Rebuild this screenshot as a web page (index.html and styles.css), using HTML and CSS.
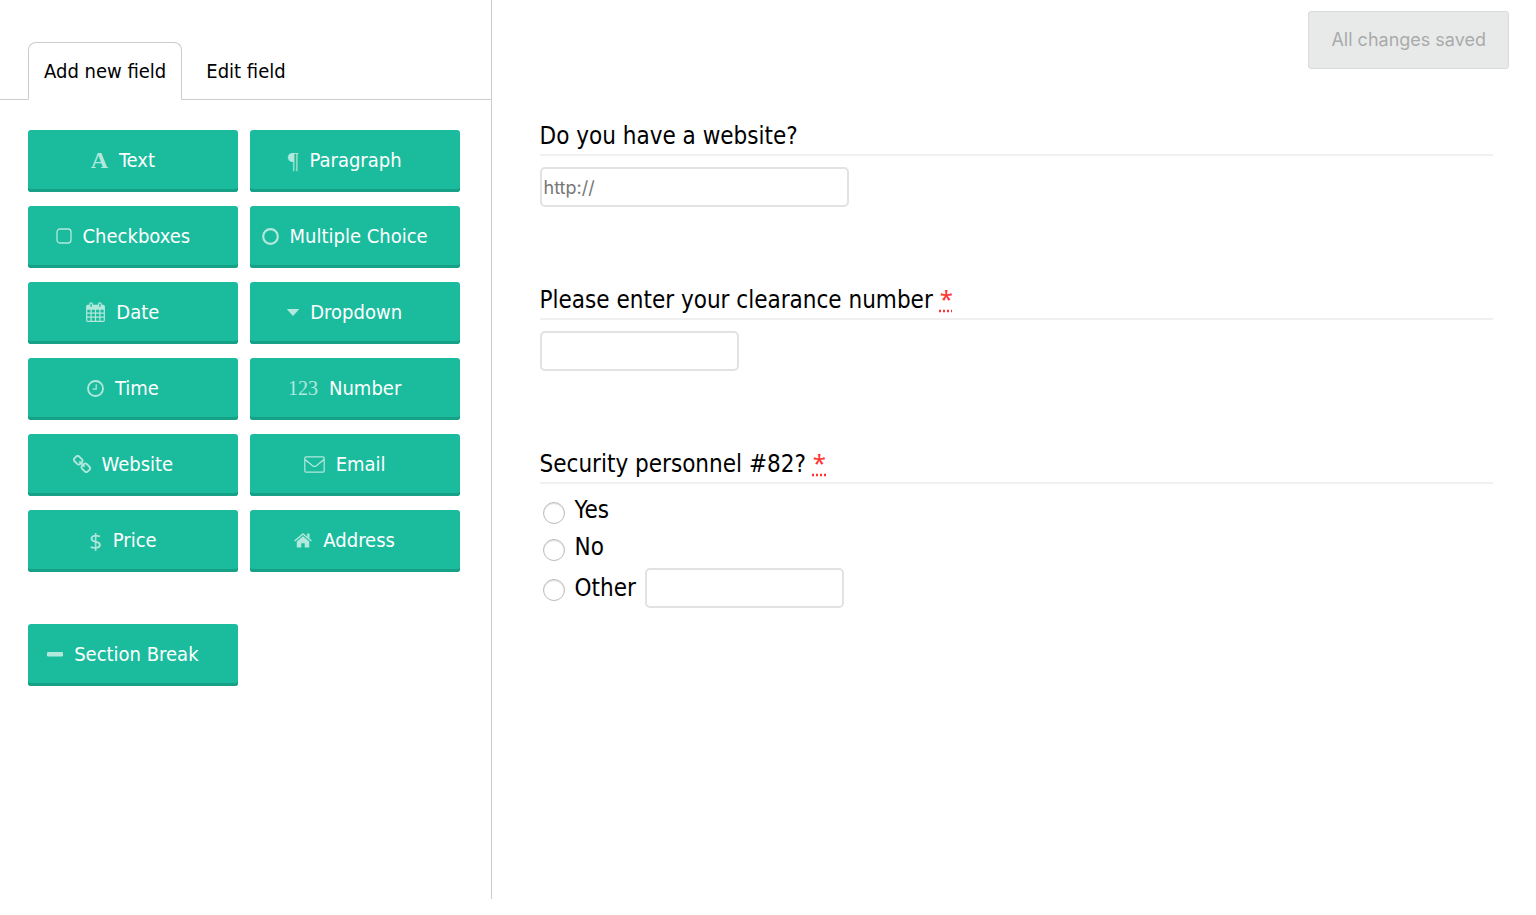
FILE: index.html
```html
<!DOCTYPE html>
<html lang="en">
<head>
<meta charset="UTF-8" />
<meta name="viewport" content="width=device-width, initial-scale=1" />
<title>Form builder</title>
<link rel="stylesheet" href="styles.css">
</head>
<body>

<div class="builder">
  <aside class="sidebar">
    <nav class="tabs">
      <a class="tab active" href="#add">Add new field</a>
      <a class="tab" href="#edit">Edit field</a>
    </nav>

    <div class="field-types" id="add">
      <button type="button" class="add-btn"><span class="glyph bold">A</span>Text</button>
      <button type="button" class="add-btn"><span class="glyph pilcrow">¶</span>Paragraph</button>
      <button type="button" class="add-btn">
        <svg class="icon" width="16" height="16" viewBox="0 0 16 16"><rect x="1" y="1" width="14" height="14" rx="3" stroke-width="1.3"/></svg>Checkboxes
      </button>
      <button type="button" class="add-btn">
        <svg class="icon" width="17" height="17" viewBox="0 0 17 17"><circle cx="8.5" cy="8.5" r="7.3" stroke-width="2.2"/></svg>Multiple Choice
      </button>
      <button type="button" class="add-btn">
        <svg class="icon" width="19" height="20" viewBox="0 0 19 20"><rect x=".7" y="3.4" width="17.6" height="15.9" rx="1"/><path d="M.7 7.2h17.6M.7 11.2h17.6M.7 15.2h17.6M5.1 7.2v12.1M9.5 7.2v12.1M13.9 7.2v12.1"/><path d="M1 4h17v3H1z" fill="currentColor" stroke="none"/><rect class="ring" x="3.8" y=".8" width="2.6" height="4.8" rx="1.3"/><rect class="ring" x="12.6" y=".8" width="2.6" height="4.8" rx="1.3"/></svg>Date
      </button>
      <button type="button" class="add-btn">
        <svg class="icon" width="12" height="7" viewBox="0 0 12 7"><path d="M.5 0h11q.7.3.2.8L6.5 6.6q-.5.4-1 0L.3.8Q-.2.3.5 0z" fill="currentColor" stroke="none"/></svg>Dropdown
      </button>
      <button type="button" class="add-btn">
        <svg class="icon" width="17" height="17" viewBox="0 0 17 17"><circle cx="8.5" cy="8.5" r="7.5" stroke-width="1.8"/><path d="M9.2 4.2v5H5.7"/></svg>Time
      </button>
      <button type="button" class="add-btn"><span class="glyph">123</span>Number</button>
      <button type="button" class="add-btn">
        <svg class="icon" width="18" height="18" viewBox="0 0 18 18"><g stroke-width="1.8"><rect x="-4" y="-3.3" width="8" height="6.6" rx="2.2" transform="translate(5.2 5.2) rotate(45)"/><rect x="-4" y="-3.3" width="8" height="6.6" rx="2.2" transform="translate(12.8 12.8) rotate(45)"/><path d="M6.3 6.3l5.4 5.4"/></g></svg>Website
      </button>
      <button type="button" class="add-btn">
        <svg class="icon" width="21" height="17" viewBox="0 0 21 17"><rect x=".8" y=".8" width="19.4" height="15.4" rx="1.4"/><path d="M1 3.5c3 2.700 5 4 7.500 6.200q2 1.500 4 0C15 7.500 17 6.200 20 3.500"/></svg>Email
      </button>
      <button type="button" class="add-btn"><span class="glyph sans">$</span>Price</button>
      <button type="button" class="add-btn">
        <svg class="icon" width="18" height="15" viewBox="0 0 18 15"><path d="M9 3.300l6.200 5.200v5.400q0 .7-.7.700h-3.800v-4.300H7.300v4.300H3.500q-.7 0-.7-.7V8.500z" fill="currentColor" stroke="none"/><path d="M.6 8L9 1l8.400 7" stroke-width="1.5"/><path d="M13.200.5h2.300v5l-2.300-2z" fill="currentColor" stroke="none"/></svg>Address
      </button>
    </div>

    <div class="field-types">
      <button type="button" class="add-btn">
        <svg class="icon" width="16" height="5" viewBox="0 0 16 5"><rect width="16" height="4.5" rx="1.2" fill="currentColor" stroke="none"/></svg>Section Break
      </button>
    </div>
  </aside>

  <main class="preview">
    <button type="button" class="save-btn" disabled>All changes saved</button>

    <form class="form">
      <div class="field">
        <label class="field-label" for="website">Do you have a website?</label>
        <input class="input wide" type="text" id="website" placeholder="http://">
      </div>

      <div class="field">
        <label class="field-label" for="clearance">Please enter your clearance number <abbr class="required">*</abbr></label>
        <input class="input" type="text" id="clearance">
      </div>

      <fieldset class="field">
        <legend class="field-label">Security personnel #82? <abbr class="required">*</abbr></legend>
        <label class="option"><input type="radio" name="security">Yes</label>
        <label class="option"><input type="radio" name="security">No</label>
        <div class="option other">
          <label class="option"><input type="radio" name="security">Other</label>
          <input class="input" type="text" aria-label="Other">
        </div>
      </fieldset>
    </form>
  </main>
</div>

</body>
</html>
```
FILE: styles.css
```css
* {
  box-sizing: border-box;
}
body {
  margin: 0;
  background: #fff;
  color: #000;
  font-family: Tahoma, "DejaVu Sans Condensed", "Noto Sans", sans-serif;
}
.builder {
  display: flex;
  min-height: calc(100vh - 16px);
  margin-bottom: 16px;
}

/* Sidebar */
.sidebar {
  width: 32%;
  border-right: 1px solid #ccc;
}
.tabs {
  display: flex;
  align-items: flex-end;
  height: 100px;
  padding-left: 28px;
  border-bottom: 1px solid #ccc;
}
.tab {
  height: 58px;
  margin-bottom: -1px;
  padding: 0 15px;
  border: 1px solid transparent;
  color: #000;
  font-size: 20px;
  line-height: 56px;
  text-decoration: none;
  white-space: nowrap;
}
.tab + .tab {
  margin-left: 8px;
}
.tab.active {
  background: #fff;
  border-color: #ccc;
  border-bottom-color: #fff;
  border-radius: 8px 8px 0 0;
}
.field-types {
  display: grid;
  grid-template-columns: 1fr 1fr;
  gap: 14px 12px;
  padding: 30px 31px 0 28px;
}
.field-types + .field-types {
  padding-top: 52px;
}
.add-btn {
  display: flex;
  align-items: center;
  justify-content: center;
  gap: 11px;
  height: 62px;
  padding: 0 20px 2px 0;
  border: none;
  border-radius: 3px;
  background: #1bbc9d;
  box-shadow: inset 0 -3px 0 #16a085;
  color: #fff;
  font-family: inherit;
  font-size: 20px;
  white-space: nowrap;
  cursor: pointer;
}
.icon {
  flex: none;
  color: #b3e8dd;
  fill: none;
  stroke: currentColor;
  stroke-width: 1.2;
}
.icon .ring {
  fill: #1bbc9d;
}
.glyph {
  color: #b3e8dd;
  font-family: "Liberation Serif", serif;
}
.glyph.bold {
  font-size: 24px;
  font-weight: bold;
}
.glyph.pilcrow {
  font-size: 24px;
}
.glyph.sans {
  font-family: "Open Sans", sans-serif;
  font-size: 22px;
}

/* Form preview */
.preview {
  flex: 1;
  display: flex;
  flex-direction: column;
  padding: 11px 27px 0 48px;
}
.save-btn {
  align-self: flex-end;
  height: 58px;
  padding: 0 22px 1px;
  border: 1px solid #d9dcdc;
  border-radius: 3px;
  background: #e8eaea;
  color: #aaa;
  font-family: Inter, sans-serif;
  font-size: 18px;
}
.form {
  padding: 50px 16px 0 0;
}
.field {
  margin: 0 0 76px;
  padding: 0;
  border: none;
}
.field-label {
  display: block;
  width: 100%;
  margin-bottom: 11px;
  padding: 0;
  border-bottom: 2px solid #f0f0f0;
  font-size: 24px;
  line-height: 35px;
}
legend.field-label {
  margin-bottom: 8px;
}
.required {
  color: #f33;
  font-family: "Noto Sans", sans-serif;
  line-height: 1;
  text-decoration: underline dotted;
}
.input {
  display: block;
  width: 199px;
  height: 40px;
  padding: 2px;
  border: 2px solid #e2e2e2;
  border-radius: 5px;
  background: #fff;
  font-family: Inter, sans-serif;
  font-size: 18px;
}
.input.wide {
  width: 309px;
}
.input::placeholder {
  color: #777;
}
.option {
  display: flex;
  align-items: center;
  font-size: 24px;
  line-height: 37px;
}
.option input[type="radio"] {
  appearance: none;
  width: 22px;
  height: 22px;
  margin: 4px 10px 0 3px;
  border: 1px solid #bbb;
  border-radius: 50%;
  background: #fff;
  box-shadow: inset 0 1px 1px #ddd;
}
.other {
  gap: 9px;
  margin-top: 2px;
}
```
